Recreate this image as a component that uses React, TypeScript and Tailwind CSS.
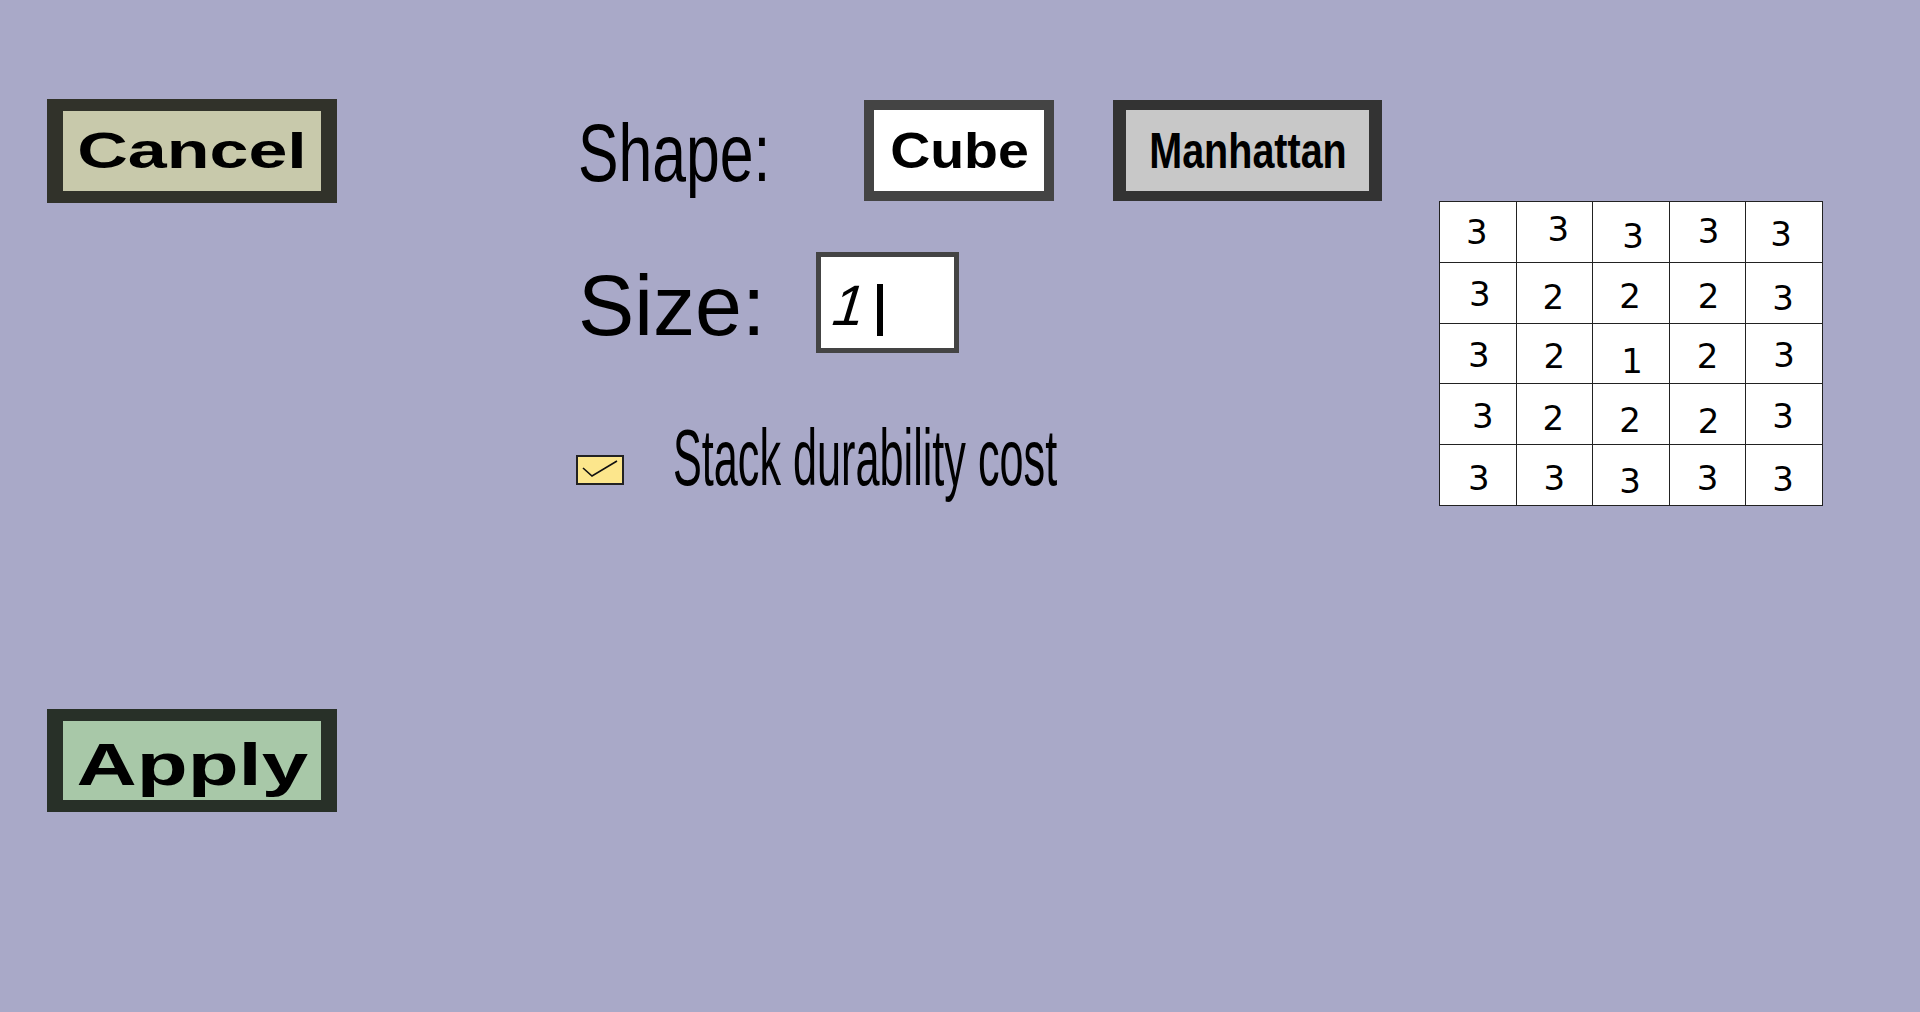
import { useState } from "react";

// distance grid shown on the right, with the small jitter of each digit
const grid: { v: number; dx: number; dy: number }[][] = [
  [{ v: 3, dx: -1, dy: 0 }, { v: 3, dx: 4, dy: -3 }, { v: 3, dx: 2, dy: 4 }, { v: 3, dx: 1, dy: -1 }, { v: 3, dx: -3, dy: 2 }],
  [{ v: 3, dx: 2, dy: 1 }, { v: 2, dx: -1, dy: 4 }, { v: 2, dx: -1, dy: 3 }, { v: 2, dx: 1, dy: 3 }, { v: 3, dx: -1, dy: 5 }],
  [{ v: 3, dx: 1, dy: 2 }, { v: 2, dx: 0, dy: 3 }, { v: 1, dx: 1, dy: 8 }, { v: 2, dx: 0, dy: 3 }, { v: 3, dx: 0, dy: 2 }],
  [{ v: 3, dx: 5, dy: 2 }, { v: 2, dx: -1, dy: 4 }, { v: 2, dx: -1, dy: 6 }, { v: 2, dx: 1, dy: 7 }, { v: 3, dx: -1, dy: 2 }],
  [{ v: 3, dx: 1, dy: 3 }, { v: 3, dx: 0, dy: 3 }, { v: 3, dx: -1, dy: 6 }, { v: 3, dx: 0, dy: 3 }, { v: 3, dx: -1, dy: 4 }],
];

const sans = "font-['Liberation_Sans',Arial,sans-serif]";

export default function App() {
  const [shape, setShape] = useState("cube");
  const [stack, setStack] = useState(true);

  return (
    <div className={`flex h-screen w-full overflow-hidden bg-[#a9a9c8] text-black ${sans}`}>
      {/* Left: Cancel / Apply */}
      <div className="ml-[47px] flex w-[290px] shrink-0 flex-col pt-[99px]">
        <button className="flex h-[104px] w-[290px] items-center justify-center border-x-[16px] border-y-[12px] border-[#31322a] bg-[#c8c9ab]">
          <span className="inline-block scale-x-[1.4] text-[50px] font-bold leading-[50px]">Cancel</span>
        </button>
        <button className="mt-[506px] flex h-[103px] w-[290px] items-center justify-center border-x-[16px] border-y-[12px] border-[#283028] bg-[#a8c8a8] pt-[8px]">
          <span className="inline-block scale-x-[1.39] text-[60px] font-bold leading-[60px]">Apply</span>
        </button>
      </div>

      {/* Middle: options */}
      <div className="ml-[241px] flex w-[804px] shrink-0 flex-col pt-[100px]">
        <div className="flex items-start">
          <div className="mt-[12px] w-[286px] shrink-0">
            <span className="inline-block origin-left scale-x-[0.74] whitespace-nowrap text-[82px] leading-[82px]">Shape:</span>
          </div>
          <button
            onClick={() => setShape("cube")}
            className={`flex h-[101px] w-[190px] shrink-0 items-center justify-center border-[10px] border-[#444444] ${shape === "cube" ? "bg-white" : "bg-[#c8c8c8]"}`}
          >
            <span className="inline-block scale-x-[1.11] text-[50px] font-bold leading-[50px]">Cube</span>
          </button>
          <button
            onClick={() => setShape("manhattan")}
            className={`ml-[59px] flex h-[101px] w-[269px] shrink-0 items-center justify-center border-x-[13px] border-y-[10px] border-[#333333] ${shape === "manhattan" ? "bg-white" : "bg-[#c8c8c8]"}`}
          >
            <span className="inline-block scale-x-[0.79] text-[50px] font-bold leading-[50px]">Manhattan</span>
          </button>
        </div>

        <div className="mt-[51px] flex items-start">
          <div className="mt-[10px] w-[238px] shrink-0">
            <span className="inline-block origin-left scale-x-[0.98] whitespace-nowrap text-[86px] leading-[86px]">Size:</span>
          </div>
          <div className="flex h-[101px] w-[143px] shrink-0 items-start border-[5px] border-[#444444] bg-white pl-[12px] pt-[20px]">
            <span className="inline-block -skew-x-6 text-[57px] italic leading-[57px]">1</span>
            <div className="ml-[12px] mt-[7px] h-[52px] w-[6px] bg-black" />
          </div>
        </div>

        <div className="mt-[65px] flex items-start">
          <button
            onClick={() => setStack(!stack)}
            className="-ml-[2px] mt-[37px] flex h-[30px] w-[48px] shrink-0 items-center justify-center border-2 border-[#222222] bg-[#fce68c]"
          >
            {stack && (
              <svg width="44" height="26" viewBox="0 0 44 26" fill="none">
                <polyline points="5,11 14,19 39,4" stroke="#111" strokeWidth="1.6" />
              </svg>
            )}
          </button>
          <div className="ml-[49px]">
            <span className="inline-block origin-left scale-x-[0.54] whitespace-nowrap text-[80px] leading-[80px]">Stack durability cost</span>
          </div>
        </div>
      </div>

      {/* Right: distance preview */}
      <div className="ml-[57px] shrink-0 pt-[201px]">
        <div className="grid grid-cols-[repeat(5,76.6px)] border-l border-t border-[#222222] bg-white font-['DejaVu_Sans',Verdana,sans-serif]">
          {grid.flatMap((row, r) =>
            row.map((c, i) => (
              <div key={`${r}-${i}`} className="flex h-[60.8px] items-center justify-center border-b border-r border-[#222222]">
                <span className="text-[34px] leading-[34px]" style={{ transform: `translate(${c.dx}px, ${c.dy}px)` }}>
                  {c.v}
                </span>
              </div>
            ))
          )}
        </div>
      </div>
    </div>
  );
}
